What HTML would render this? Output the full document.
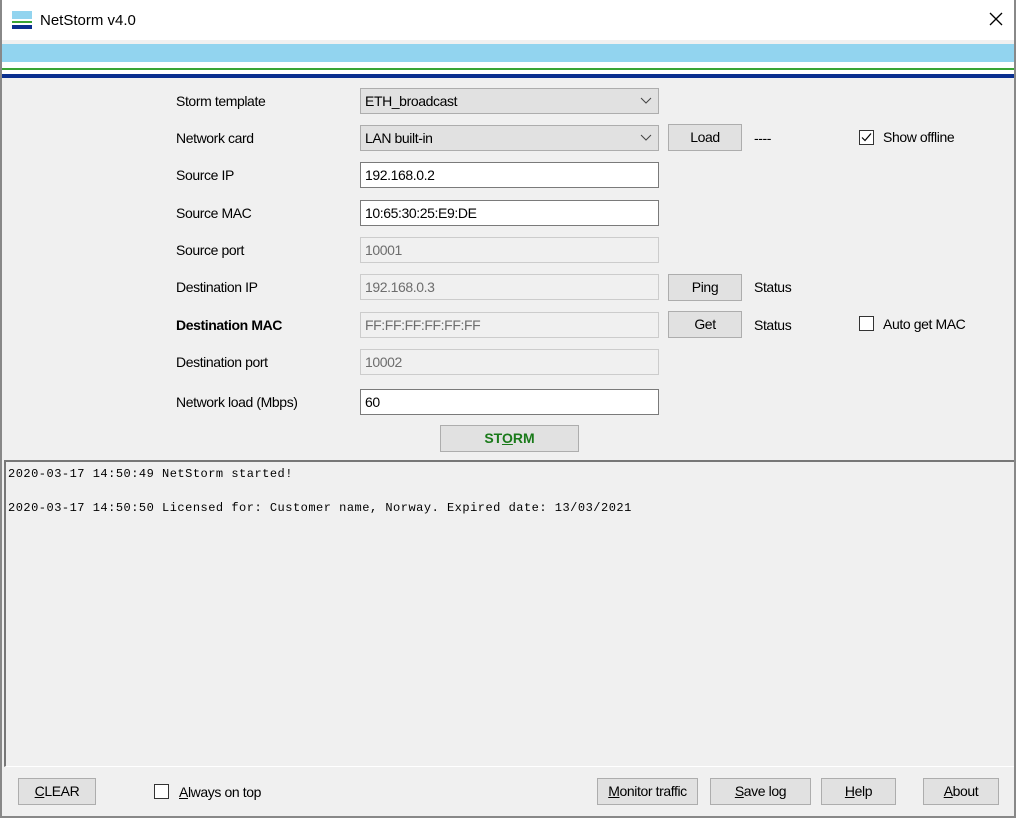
<!DOCTYPE html>
<html><head><style>
*{box-sizing:border-box;margin:0;padding:0}
body{width:1016px;height:818px;background:#f0f0f0;font-family:"Liberation Sans",sans-serif;font-size:14px;color:#000;position:relative;overflow:hidden;letter-spacing:-0.4px}
.a{position:absolute}
.lbl{position:absolute;left:176px;line-height:26px;height:26px}
.in{position:absolute;left:360px;width:299px;height:26px;border:1px solid #7a7a7a;background:#fff;padding-left:4px;line-height:24px}
.dis{background:#f0f0f0;border-color:#ccc;color:#6d6d6d}
.cb{background:#e1e1e1;border-color:#adadad}
.cb svg{position:absolute;right:6px;top:8px}
.btn{position:absolute;background:#e1e1e1;border:1px solid #adadad;text-align:center;height:27px;line-height:25px}
.chk{position:absolute;width:15px;height:15px;border:1px solid #333;background:#fff}
</style></head><body>
<div class="a" style="left:0;top:0;width:1016px;height:40px;background:#fff"></div>
<div class="a" style="left:12px;top:11px;width:20px;height:8px;background:#92d4ef"></div>
<div class="a" style="left:12px;top:21px;width:20px;height:2px;background:#3aa535"></div>
<div class="a" style="left:12px;top:25px;width:20px;height:4px;background:#0a2f8f"></div>
<div class="a" style="left:40px;top:12px;font-size:15px;letter-spacing:0">NetStorm v4.0</div>
<svg class="a" style="left:989px;top:12px" width="14" height="14"><path d="M1 1L13 13M13 1L1 13" stroke="#000" stroke-width="1.3"/></svg>
<div class="a" style="left:0;top:0;width:2px;height:818px;background:#888"></div>
<div class="a" style="left:1014px;top:0;width:2px;height:818px;background:#888"></div>
<div class="a" style="left:2px;top:44px;width:1012px;height:18px;background:#92d4ef"></div>
<div class="a" style="left:2px;top:62px;width:1012px;height:6px;background:#fff"></div>
<div class="a" style="left:2px;top:68px;width:1012px;height:2px;background:#3aa535"></div>
<div class="a" style="left:2px;top:70px;width:1012px;height:4px;background:#fff"></div>
<div class="a" style="left:2px;top:74px;width:1012px;height:4px;background:#0a2f8f"></div>

<div class="lbl" style="top:88px">Storm template</div>
<div class="in cb" style="top:88px">ETH_broadcast<svg width="12" height="8"><path d="M1 1L6 6L11 1" fill="none" stroke="#444"/></svg></div>
<div class="lbl" style="top:125px">Network card</div>
<div class="in cb" style="top:125px">LAN built-in<svg width="12" height="8"><path d="M1 1L6 6L11 1" fill="none" stroke="#444"/></svg></div>
<div class="btn" style="left:668px;top:124px;width:74px">Load</div>
<div class="a" style="left:754px;top:130px">----</div>
<div class="chk" style="left:859px;top:130px"><svg width="13" height="13" style="position:absolute;left:0;top:0"><path d="M2 6.5L5 9.5L11 2.5" fill="none" stroke="#000" stroke-width="1.2"/></svg></div>
<div class="a" style="left:883px;top:129px">Show offline</div>
<div class="lbl" style="top:162px">Source IP</div>
<div class="in" style="top:162px">192.168.0.2</div>
<div class="lbl" style="top:200px">Source MAC</div>
<div class="in" style="top:200px">10:65:30:25:E9:DE</div>
<div class="lbl" style="top:237px">Source port</div>
<div class="in dis" style="top:237px">10001</div>
<div class="lbl" style="top:274px">Destination IP</div>
<div class="in dis" style="top:274px">192.168.0.3</div>
<div class="btn" style="left:668px;top:274px;width:74px">Ping</div>
<div class="a" style="left:754px;top:279px">Status</div>
<div class="lbl" style="top:312px;font-weight:bold">Destination MAC</div>
<div class="in dis" style="top:312px">FF:FF:FF:FF:FF:FF</div>
<div class="btn" style="left:668px;top:311px;width:74px">Get</div>
<div class="a" style="left:754px;top:317px">Status</div>
<div class="chk" style="left:859px;top:316px"></div>
<div class="a" style="left:883px;top:316px">Auto get MAC</div>
<div class="lbl" style="top:349px">Destination port</div>
<div class="in dis" style="top:349px">10002</div>
<div class="lbl" style="top:389px">Network load (Mbps)</div>
<div class="in" style="top:389px">60</div>
<div class="btn" style="left:440px;top:425px;width:139px;color:#1a7a1a;font-weight:bold;letter-spacing:0">ST<u>O</u>RM</div>

<div class="a" style="left:4px;top:460px;width:1010px;height:307px;border-top:2px solid #777;border-left:2px solid #777;border-bottom:1px solid #fff;background:#f0f0f0;font-family:'Liberation Mono',monospace;font-size:12px;letter-spacing:0.5px;padding:5px 0 0 2px">
<div style="line-height:14px">2020-03-17 14:50:49 NetStorm started!</div>
<div style="line-height:14px;margin-top:20px">2020-03-17 14:50:50 Licensed for: Customer name, Norway. Expired date: 13/03/2021</div>
</div>

<div class="btn" style="left:18px;top:778px;width:78px"><u>C</u>LEAR</div>
<div class="chk" style="left:154px;top:784px"></div>
<div class="a" style="left:179px;top:784px"><u>A</u>lways on top</div>
<div class="btn" style="left:597px;top:778px;width:101px"><u>M</u>onitor traffic</div>
<div class="btn" style="left:710px;top:778px;width:101px"><u>S</u>ave log</div>
<div class="btn" style="left:821px;top:778px;width:75px"><u>H</u>elp</div>
<div class="btn" style="left:923px;top:778px;width:76px"><u>A</u>bout</div>
<div class="a" style="left:0;top:816px;width:1016px;height:2px;background:#888"></div>
</body></html>
